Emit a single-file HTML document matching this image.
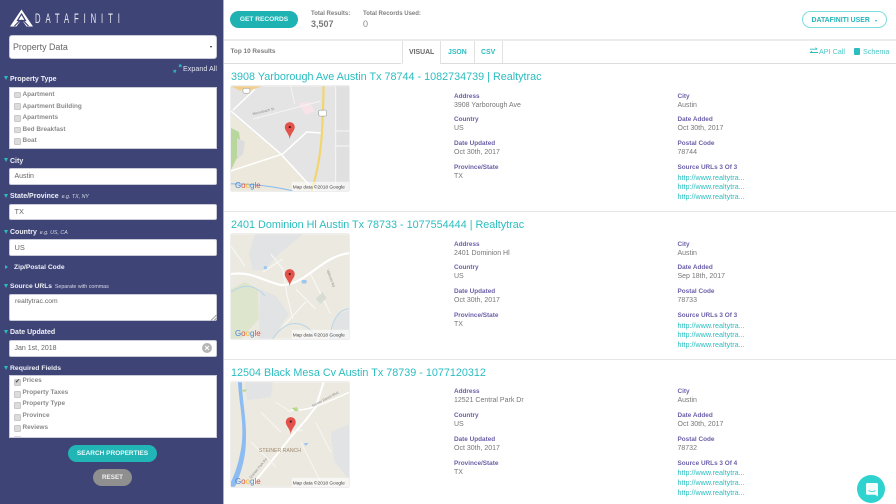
<!DOCTYPE html>
<html><head><meta charset="utf-8">
<style>
html,body{margin:0;padding:0;width:896px;height:504px;overflow:hidden;background:#fff;font-family:"Liberation Sans",sans-serif}
#p{position:relative;width:896px;height:504px;overflow:hidden;filter:blur(.3px)}
.a{position:absolute;white-space:nowrap}
.t{position:absolute;white-space:nowrap;line-height:10px;height:10px}
.side{position:absolute;left:0;top:0;width:223px;height:504px;background:#3f4476;border-right:1px solid #aeb0c4}
.lab{position:absolute;white-space:nowrap;line-height:10px;font-size:7px;font-weight:bold;color:#eef0f6;left:10px}
.lab i{font-weight:normal;font-size:5.3px;color:#d5d8e6;margin-left:1px}
.lab span{font-weight:normal;font-size:5.3px;color:#d5d8e6;margin-left:1px}
.tri{position:absolute;left:3.5px;width:0;height:0;border-left:2.4px solid transparent;border-right:2.4px solid transparent;border-top:4px solid #2bbcc0}
.box{position:absolute;left:9px;width:206px;background:#fff;border:1px solid #c9cbd8;border-radius:2px}
.inp{font-size:7px;color:#666;line-height:14px;padding-left:4.5px;width:201.5px}
.cb{position:absolute;left:14px;width:4.5px;height:4.5px;background:#dcdcdc;border:1px solid #c8c8c8;border-radius:1.5px}
.ct{position:absolute;left:22.5px;font-size:6.4px;font-weight:bold;color:#8a8a8a;line-height:10px;white-space:nowrap}
.title{position:absolute;left:231px;font-size:10.8px;color:#2bbdc0;line-height:14px;white-space:nowrap}
.k{position:absolute;font-size:6.4px;font-weight:bold;color:#6c5fa8;line-height:9px;white-space:nowrap}
.v{position:absolute;font-size:7px;color:#777;line-height:9px;white-space:nowrap}
.u{position:absolute;font-size:7.2px;color:#2bbdc0;line-height:9px;white-space:nowrap}
.map{position:absolute;left:230.5px;width:118.5px;height:105px;box-shadow:0 0 1px #aaa}
.hr{position:absolute;background:#e6e6e6}
</style></head><body><div id="p">

<div class="side"></div>
<svg class="a" style="left:10px;top:9px" width="23" height="18" viewBox="0 0 23 18"><path d="M11.5 0.5L23 17.5H16.5L11.5 10.5 6.5 17.5H0Z" fill="#fff"/><path d="M11.5 5L15.5 11.5H7.5Z M4.5 17L9.5 12H13.5L18.5 17" fill="none" stroke="#3f4476" stroke-width="1.2"/></svg>
<div class="t" style="left:35px;top:10px;font-size:14px;line-height:16px;height:16px;color:#e8eaf2;transform:scaleX(.55);transform-origin:0 0;letter-spacing:8.9px">DATAFINITI</div>

<div class="box" style="top:35px;height:22px;border-radius:3px"></div>
<div class="t" style="left:13px;top:41.5px;font-size:8.9px;color:#666">Property Data</div>
<div class="a" style="left:210px;top:46px;width:0;height:0;border-left:1.5px solid transparent;border-right:1.5px solid transparent;border-top:2px solid #222"></div>

<svg class="a" style="left:173px;top:64px" width="9" height="9" viewBox="0 0 9 9"><path d="M1 8L3 6M6 3L8 1" stroke="#2bbcc0" stroke-width="1.4"/><path d="M0.5 5.5V8.5H3.5Z M5.5 0.5H8.5V3.5Z" fill="#2bbcc0"/></svg>
<div class="t" style="left:183px;top:64px;font-size:7.2px;color:#dfe2ee">Expand All</div>

<div class="tri" style="top:76px"></div>
<div class="lab" style="top:75px">Property Type</div>
<div class="box" style="top:87px;height:60px;border-radius:0"></div>
<div class="cb" style="top:91.5px"></div><div class="ct" style="top:90px">Apartment</div>
<div class="cb" style="top:103px"></div><div class="ct" style="top:101.5px">Apartment Building</div>
<div class="cb" style="top:115px"></div><div class="ct" style="top:113.3px">Apartments</div>
<div class="cb" style="top:126.5px"></div><div class="ct" style="top:124.5px">Bed Breakfast</div>
<div class="cb" style="top:138px"></div><div class="ct" style="top:136px">Boat</div>

<div class="tri" style="top:158px"></div>
<div class="lab" style="top:157px">City</div>
<div class="box inp" style="top:168px;height:15px;line-height:15px">Austin</div>

<div class="tri" style="top:194px"></div>
<div class="lab" style="top:192px">State/Province <i>e.g. TX, NY</i></div>
<div class="box inp" style="top:204px;height:14px;font-size:7.4px">TX</div>

<div class="tri" style="top:230px"></div>
<div class="lab" style="top:228px">Country <i>e.g. US, CA</i></div>
<div class="box inp" style="top:239px;height:15px;line-height:15px;font-size:7.4px">US</div>

<div class="a" style="left:5px;top:264.5px;width:0;height:0;border-top:2.5px solid transparent;border-bottom:2.5px solid transparent;border-left:3.5px solid #2bbcc0"></div>
<div class="lab" style="left:14px;top:263px;font-size:6.7px">Zip/Postal Code</div>

<div class="tri" style="top:284px"></div>
<div class="lab" style="top:282px;font-size:6.7px">Source URLs <span>Separate with commas</span></div>
<div class="box" style="top:294px;height:25px"></div>
<div class="t" style="left:15px;top:297px;font-size:6.8px;color:#666">realtytrac.com</div>
<svg class="a" style="left:211px;top:315px" width="6" height="6"><path d="M0 5.5L5.5 0M3 5.5L5.5 3" stroke="#777" stroke-width=".7"/></svg>

<div class="tri" style="top:330px"></div>
<div class="lab" style="top:328px">Date Updated</div>
<div class="box inp" style="top:340px;height:15px;line-height:15px">Jan 1st, 2018</div>
<div class="a" style="left:202px;top:343px;width:10px;height:10px;border-radius:50%;background:#b4b4b4;color:#fff;font-size:9px;line-height:10px;text-align:center;font-weight:bold">×</div>

<div class="tri" style="top:366px"></div>
<div class="lab" style="top:363.5px;font-size:6.8px">Required Fields</div>
<div class="box" style="top:375px;height:61px;border-radius:0;overflow:hidden"></div>
<div class="cb" style="top:379px;background:#d5d5d5"></div>
<div class="t" style="left:15px;top:376.5px;font-size:6px;color:#444">✔</div>
<div class="ct" style="top:376px">Prices</div>
<div class="cb" style="top:391px"></div><div class="ct" style="top:388px">Property Taxes</div>
<div class="cb" style="top:402px"></div><div class="ct" style="top:399px">Property Type</div>
<div class="cb" style="top:414px"></div><div class="ct" style="top:411px">Province</div>
<div class="cb" style="top:425px"></div><div class="ct" style="top:422.5px">Reviews</div>
<div class="a" style="left:14px;top:436px;width:7px;height:1px;background:#dcdcdc"></div>

<div class="a" style="left:68px;top:445px;width:89px;height:17px;border-radius:9px;background:#22b5b5;color:#e9fafa;font-size:6.5px;font-weight:bold;line-height:17px;text-align:center">SEARCH PROPERTIES</div>
<div class="a" style="left:93px;top:469px;width:39px;height:17px;border-radius:9px;background:#8f8f8f;color:#f2f2f2;font-size:6.3px;font-weight:bold;line-height:17px;text-align:center">RESET</div>

<!-- top bar -->
<div class="a" style="left:230px;top:11px;width:68px;height:17px;border-radius:9px;background:#1fb2b2;color:#e9fafa;font-size:6.6px;font-weight:bold;line-height:17px;text-align:center">GET RECORDS</div>
<div class="t" style="left:311px;top:9px;font-size:6px;font-weight:bold;color:#808080">Total Results:</div>
<div class="t" style="left:311px;top:18.5px;font-size:9px;font-weight:bold;color:#7a7a7a">3,507</div>
<div class="t" style="left:363px;top:9px;font-size:6px;font-weight:bold;color:#808080">Total Records Used:</div>
<div class="t" style="left:363px;top:18.5px;font-size:9px;color:#888">0</div>
<div class="a" style="left:802px;top:11px;width:85px;height:16.5px;box-sizing:border-box;border:1px solid #7fdcdc;border-radius:9px;color:#25b5b8;font-size:6.9px;font-weight:bold;line-height:15px;padding-left:8.5px;padding-top:1px">DATAFINITI USER</div>
<div class="a" style="left:875px;top:20px;width:0;height:0;border-left:1.5px solid transparent;border-right:1.5px solid transparent;border-top:2px solid #25b5b8"></div>

<div class="hr" style="left:224px;top:39px;width:672px;height:2px;background:#ececec"></div>
<div class="hr" style="left:224px;top:63px;width:177px;height:1px;background:#dcdcdc"></div>
<div class="hr" style="left:441px;top:63px;width:455px;height:1px;background:#dcdcdc"></div>
<div class="hr" style="left:402px;top:41px;width:1px;height:23px;background:#e2e2e2"></div>
<div class="hr" style="left:440px;top:41px;width:1px;height:23px;background:#e2e2e2"></div>
<div class="hr" style="left:474px;top:41px;width:1px;height:22px;background:#e2e2e2"></div>
<div class="hr" style="left:502px;top:41px;width:1px;height:22px;background:#e2e2e2"></div>
<div class="t" style="left:230.5px;top:47px;font-size:6.4px;font-weight:bold;color:#7c7c7c">Top 10 Results</div>
<div class="t" style="left:409px;top:47.5px;font-size:6.9px;font-weight:bold;color:#666">VISUAL</div>
<div class="t" style="left:448px;top:47.5px;font-size:6.9px;font-weight:bold;color:#2bbdc0">JSON</div>
<div class="t" style="left:481px;top:47.5px;font-size:6.9px;font-weight:bold;color:#2bbdc0">CSV</div>
<svg class="a" style="left:810px;top:47px" width="8" height="8" viewBox="0 0 8 8"><path d="M0 2.2H7M5.5 .7L7 2.2M8 5.5H0M2 4L.5 5.5" fill="none" stroke="#2bbdc0" stroke-width=".9"/></svg>
<div class="t" style="left:819px;top:46.5px;font-size:7.2px;color:#4cc6c8">API Call</div>
<div class="a" style="left:854px;top:48px;width:5.5px;height:6.5px;background:#2bbdc0;border-radius:1px"></div>
<div class="t" style="left:863px;top:46.5px;font-size:7.2px;color:#4cc6c8">Schema</div>

<!-- result 1 -->
<div class="title" style="top:70px">3908 Yarborough Ave Austin Tx 78744 - 1082734739 | Realtytrac</div>
<svg class="map" style="top:86px" viewBox="0 0 119 105">
<rect width="119" height="105" fill="#e4e4e4"/>
<path d="M0 28L50 68 84 105H0Z" fill="#ece9dc"/>
<path d="M0 42L8 46 10 60 8 68 0 84Z" fill="#b7d79c"/>
<path d="M6 52L14 56 12 68 6 74Z" fill="#dcdcdc"/>
<path d="M0 0H31L20 4H8Z" fill="#f2cf8e"/>
<path d="M68 17L79 16 84 25 75 29Z" fill="#f8e3e8"/>
<path d="M104 0H119V105H104Z" fill="#e0e0e0"/>
<path d="M104 45H119M104 60H119M105 0V105" stroke="#f3f3f3" stroke-width="1.3"/>
<path d="M0 25L50 68 84 105M52 68L76 46 92 47M0 85L52 68M24 3L2 24" fill="none" stroke="#fff" stroke-width="1.5"/>
<path d="M93 0C92 40 92 70 81 105" fill="none" stroke="#f2d56e" stroke-width="2.2"/>
<path d="M22 33L90 15M60 0L64 18" fill="none" stroke="#f4f4f4" stroke-width="1"/>
<path d="M0 98C20 98 40 100 62 105" fill="none" stroke="#8dbdf0" stroke-width="1.2"/>
<rect x="12" y="2" width="7" height="5" rx="1.5" fill="#fff" stroke="#888" stroke-width=".5"/><rect x="88" y="24" width="8" height="6" rx="1.5" fill="#fff" stroke="#888" stroke-width=".5"/>
<text x="22" y="29" font-size="3.5" fill="#888" font-family="Liberation Sans" transform="rotate(-14 22 29)">Meusebach St</text>
<path d="M59 36a5 5 0 0 1 5 5c0 4-4 6-5 12-1-6-5-8-5-12a5 5 0 0 1 5-5z" fill="#e2524a"/><circle cx="59" cy="41" r="1.1" fill="#4a1512"/>
<rect x="61" y="96" width="58" height="9" fill="#fff" fill-opacity=".6"/>
<text x="62" y="102.5" font-size="4.8" fill="#444" font-family="Liberation Sans">Map data ©2018 Google</text>
<text x="4" y="102" font-size="8" font-family="Liberation Sans"><tspan fill="#4a86d8">G</tspan><tspan fill="#dd5044">o</tspan><tspan fill="#eeb82e">o</tspan><tspan fill="#4a86d8">g</tspan><tspan fill="#3ba55a">l</tspan><tspan fill="#dd5044">e</tspan></text>
</svg>
<div class="k" style="left:454px;top:91.5px">Address</div><div class="v" style="left:454px;top:100.5px">3908 Yarborough Ave</div>
<div class="k" style="left:454px;top:115px">Country</div><div class="v" style="left:454px;top:124px">US</div>
<div class="k" style="left:454px;top:139px">Date Updated</div><div class="v" style="left:454px;top:148px">Oct 30th, 2017</div>
<div class="k" style="left:454px;top:163px">Province/State</div><div class="v" style="left:454px;top:172px">TX</div>
<div class="k" style="left:677.5px;top:91.5px">City</div><div class="v" style="left:677.5px;top:100.5px">Austin</div>
<div class="k" style="left:677.5px;top:115px">Date Added</div><div class="v" style="left:677.5px;top:124px">Oct 30th, 2017</div>
<div class="k" style="left:677.5px;top:139px">Postal Code</div><div class="v" style="left:677.5px;top:148px">78744</div>
<div class="k" style="left:677.5px;top:163px">Source URLs 3 Of 3</div>
<div class="u" style="left:677.5px;top:172.5px">http://www.realtytra...</div><div class="u" style="left:677.5px;top:182px">http://www.realtytra...</div><div class="u" style="left:677.5px;top:192px">http://www.realtytra...</div>
<div class="hr" style="left:224px;top:211px;width:672px;height:1px"></div>

<!-- result 2 -->
<div class="title" style="top:218px">2401 Dominion Hl Austin Tx 78733 - 1077554444 | Realtytrac</div>
<svg class="map" style="top:234px" viewBox="0 0 119 105">
<rect width="119" height="105" fill="#ebe9e0"/>
<path d="M24 0H72L48 20 34 36H22L18 20Z" fill="#e2e3e4"/>
<path d="M29 55L45 62 58 80 42 105H28Z M100 105L105 82 119 76V105Z" fill="#e2e3e4"/>
<path d="M0 55L14 48 27 55 28 85 10 105H0Z" fill="#dde6cd"/>
<path d="M0 40C20 37 30 46 50 51C75 52 90 22 119 19" fill="none" stroke="#fff" stroke-width="2.2"/>
<path d="M40 20L52 35 56 60 62 85M80 40L100 80M0 12L14 32M32 38L52 25M65 55L85 75M50 95L75 68" fill="none" stroke="#f8f7f2" stroke-width="1.2"/>
<path d="M0 58C15 48 25 52 34 62M42 105C55 85 72 85 85 102M100 105C100 85 110 75 119 75" fill="none" stroke="#b7d5e8" stroke-width="1"/>
<path d="M85 65L92 58 96 64 90 70Z" fill="#d8dcd4"/>
<rect x="71" y="46" width="5" height="3.5" rx="1" fill="#9fc7ee"/><rect x="33" y="32" width="3" height="3" fill="#9fc7ee"/>
<text x="96" y="36" font-size="3.5" fill="#888" font-family="Liberation Sans" transform="rotate(70 96 36)">Vallecito Rd</text>
<path d="M59 35a5 5 0 0 1 5 5c0 4-4 6-5 12-1-6-5-8-5-12a5 5 0 0 1 5-5z" fill="#e2524a"/><circle cx="59" cy="40" r="1.1" fill="#4a1512"/>
<rect x="61" y="96" width="58" height="9" fill="#fff" fill-opacity=".6"/>
<text x="62" y="102.5" font-size="4.8" fill="#444" font-family="Liberation Sans">Map data ©2018 Google</text>
<text x="4" y="102" font-size="8" font-family="Liberation Sans"><tspan fill="#4a86d8">G</tspan><tspan fill="#dd5044">o</tspan><tspan fill="#eeb82e">o</tspan><tspan fill="#4a86d8">g</tspan><tspan fill="#3ba55a">l</tspan><tspan fill="#dd5044">e</tspan></text>
</svg>
<div class="k" style="left:454px;top:239.5px">Address</div><div class="v" style="left:454px;top:248.5px">2401 Dominion Hl</div>
<div class="k" style="left:454px;top:263px">Country</div><div class="v" style="left:454px;top:272px">US</div>
<div class="k" style="left:454px;top:287px">Date Updated</div><div class="v" style="left:454px;top:296px">Oct 30th, 2017</div>
<div class="k" style="left:454px;top:311px">Province/State</div><div class="v" style="left:454px;top:320px">TX</div>
<div class="k" style="left:677.5px;top:239.5px">City</div><div class="v" style="left:677.5px;top:248.5px">Austin</div>
<div class="k" style="left:677.5px;top:263px">Date Added</div><div class="v" style="left:677.5px;top:272px">Sep 18th, 2017</div>
<div class="k" style="left:677.5px;top:287px">Postal Code</div><div class="v" style="left:677.5px;top:296px">78733</div>
<div class="k" style="left:677.5px;top:311px">Source URLs 3 Of 3</div>
<div class="u" style="left:677.5px;top:320.5px">http://www.realtytra...</div><div class="u" style="left:677.5px;top:330px">http://www.realtytra...</div><div class="u" style="left:677.5px;top:340px">http://www.realtytra...</div>
<div class="hr" style="left:224px;top:359px;width:672px;height:1px"></div>

<!-- result 3 -->
<div class="title" style="top:365.5px">12504 Black Mesa Cv Austin Tx 78739 - 1077120312</div>
<svg class="map" style="top:382px" viewBox="0 0 119 105">
<rect width="119" height="105" fill="#ebe9e0"/>
<path d="M100 50L119 42V98L104 80Z M14 0H42L40 15 16 18Z" fill="#e2e3e4"/>
<path d="M7 0C8 20 13 40 11 60C9 78 4 92 0 100V105H4C10 92 15 75 15 58C16 38 11 18 11 0Z" fill="#8dbcf2"/>
<path d="M93 0L85 25 75 38 60 55 40 80 22 102" fill="none" stroke="#fff" stroke-width="2"/>
<path d="M60 28C75 30 92 22 119 10" fill="none" stroke="#fff" stroke-width="1.4"/>
<path d="M30 30L50 50M20 60L45 85M70 60L90 100M45 20L60 30M60 50L72 48M85 40L100 70" fill="none" stroke="#f8f7f2" stroke-width="1"/>
<path d="M61 26L66 25 68 29 64 29Z M10 8L16 7 14 10Z" fill="#b9d88f"/>
<path d="M73 61H78L75 64Z" fill="#9fc7ee"/>
<text x="28" y="70" font-size="5.2" fill="#a08a70" font-family="Liberation Sans">STEINER RANCH</text>
<text x="82" y="25" font-size="3.5" fill="#888" font-family="Liberation Sans" transform="rotate(-28 82 25)">Steiner Ranch Blvd</text>
<text x="20" y="97" font-size="3.5" fill="#888" font-family="Liberation Sans" transform="rotate(-50 20 97)">Quinlan Park Rd</text>
<path d="M60 35a5 5 0 0 1 5 5c0 4-4 6-5 12-1-6-5-8-5-12a5 5 0 0 1 5-5z" fill="#e2524a"/><circle cx="60" cy="39.5" r="1.1" fill="#4a1512"/>
<rect x="61" y="96" width="58" height="9" fill="#fff" fill-opacity=".6"/>
<text x="62" y="102.5" font-size="4.8" fill="#444" font-family="Liberation Sans">Map data ©2018 Google</text>
<text x="4" y="102" font-size="8" font-family="Liberation Sans"><tspan fill="#4a86d8">G</tspan><tspan fill="#dd5044">o</tspan><tspan fill="#eeb82e">o</tspan><tspan fill="#4a86d8">g</tspan><tspan fill="#3ba55a">l</tspan><tspan fill="#dd5044">e</tspan></text>
</svg>
<div class="k" style="left:454px;top:387px">Address</div><div class="v" style="left:454px;top:396px">12521 Central Park Dr</div>
<div class="k" style="left:454px;top:411px">Country</div><div class="v" style="left:454px;top:420px">US</div>
<div class="k" style="left:454px;top:435px">Date Updated</div><div class="v" style="left:454px;top:444px">Oct 30th, 2017</div>
<div class="k" style="left:454px;top:458.5px">Province/State</div><div class="v" style="left:454px;top:467.5px">TX</div>
<div class="k" style="left:677.5px;top:387px">City</div><div class="v" style="left:677.5px;top:396px">Austin</div>
<div class="k" style="left:677.5px;top:411px">Date Added</div><div class="v" style="left:677.5px;top:420px">Oct 30th, 2017</div>
<div class="k" style="left:677.5px;top:435px">Postal Code</div><div class="v" style="left:677.5px;top:444px">78732</div>
<div class="k" style="left:677.5px;top:458.5px">Source URLs 3 Of 4</div>
<div class="u" style="left:677.5px;top:468px">http://www.realtytra...</div><div class="u" style="left:677.5px;top:477.5px">http://www.realtytra...</div><div class="u" style="left:677.5px;top:487.5px">http://www.realtytra...</div>

<!-- chat -->
<div class="a" style="left:857px;top:475px;width:28px;height:28px;border-radius:50%;background:#2ed3d0"></div>
<svg class="a" style="left:864.5px;top:481.5px" width="14" height="16" viewBox="0 0 14 16"><path d="M2.5 1H11.5A1.5 1.5 0 0 1 13 2.5V14.500L10 12.8H2.5A1.5 1.5 0 0 1 1 11.3V2.5A1.5 1.5 0 0 1 2.5 1Z" fill="#f2fcfc"/><path d="M3.5 8.5C5.5 10 8.5 10 10.5 8.5" fill="none" stroke="#2ed3d0" stroke-width=".8"/></svg>

</div></body></html>
